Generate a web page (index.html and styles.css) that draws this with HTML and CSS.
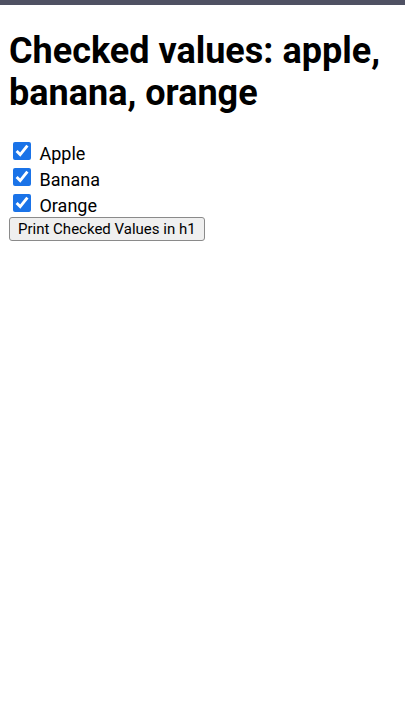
FILE: index.html
```html
<!DOCTYPE html>
<html lang="en">

<head>
    <meta charset="UTF-8">
    <meta name="viewport" content="width=device-width, initial-scale=1.0">
    <title>Checked values</title>
    <link rel="stylesheet" href="styles.css">
</head>

<body>
    <div class="topbar"></div>
    <div class="page">
        <h1 id="result">Checked values: apple, banana, orange</h1>

        <div class="fruits">
            <label class="fruit"><input type="checkbox" value="apple" checked> Apple</label><br>
            <label class="fruit"><input type="checkbox" value="banana" checked> Banana</label><br>
            <label class="fruit"><input type="checkbox" value="orange" checked> Orange</label><br>
            <button id="printBtn">Print Checked Values in h1</button>
        </div>
    </div>

    <script>
        const result = document.getElementById('result')
        const boxes = document.querySelectorAll('.fruits input')

        document.getElementById('printBtn').addEventListener('click', () => {
            let values = []
            boxes.forEach(box => {
                if (box.checked) {
                    values.push(box.value)
                }
            })
            result.innerText = "Checked values: " + values.join(", ")
        })
    </script>
</body>

</html>
```

FILE: styles.css
```css
body {
    margin: 0;
    font-family: Roboto, "Liberation Sans", sans-serif;
    color: #000;
    background-color: #fff;
}

.topbar {
    height: 5px;
    background-color: #4f5163;
}

.page {
    padding: 0 9px;
}

h1 {
    font-size: 36px;
    font-weight: 700;
    margin: 25px 0 24px 0;
    line-height: 42px;
}

.fruits {
    font-size: 18px;
    line-height: 21px;
}

.fruit input {
    width: 18px;
    height: 18px;
    margin: 4px 4px 0 4px;
    accent-color: #1a73e8;
    vertical-align: baseline;
}

#printBtn {
    font-family: Roboto, "Liberation Sans", sans-serif;
    font-size: 15px;
    line-height: 18px;
    color: #000;
    background-color: #efefef;
    border: 1px solid #8a8a8a;
    border-radius: 3px;
    padding: 2px 8px;
    margin: 1px 0 0 0;
    vertical-align: top;
}
```
